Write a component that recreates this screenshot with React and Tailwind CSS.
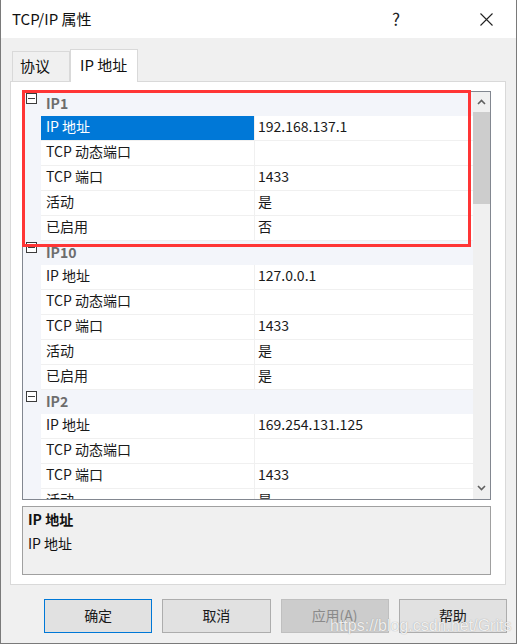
import React from "react";

const FONT = { fontFamily: '"Noto Sans CJK SC", "Noto Sans", sans-serif' };

const SECTIONS = [
  {
    name: "IP1",
    rows: [
      ["IP 地址", "192.168.137.1"],
      ["TCP 动态端口", ""],
      ["TCP 端口", "1433"],
      ["活动", "是"],
      ["已启用", "否"],
    ],
  },
  {
    name: "IP10",
    rows: [
      ["IP 地址", "127.0.0.1"],
      ["TCP 动态端口", ""],
      ["TCP 端口", "1433"],
      ["活动", "是"],
      ["已启用", "是"],
    ],
  },
  {
    name: "IP2",
    rows: [
      ["IP 地址", "169.254.131.125"],
      ["TCP 动态端口", ""],
      ["TCP 端口", "1433"],
      ["活动", "是"],
    ],
  },
];

function Collapse() {
  return (
    <div className="mt-[1px] ml-[3px] flex h-[11px] w-[11px] items-center justify-center border border-[#3c3c3c] bg-white">
      <div className="h-px w-[7px] bg-[#3c3c3c]" />
    </div>
  );
}

function Section({ s, first }) {
  return (
    <div>
      <div className="flex h-[24px] bg-[#f3f5fa]">
        <div className="w-[18px] shrink-0">
          <Collapse />
        </div>
        <div className="pl-[5px] text-[14px] font-bold leading-[22px] text-[#6d6d6d]">{s.name}</div>
      </div>
      {s.rows.map(([k, v], i) => {
        const sel = first && i === 0;
        return (
          <div key={k} className="flex h-[25px]">
            <div className="w-[18px] shrink-0 bg-[#f3f5fa]" />
            <div className="flex flex-1 border-b border-[#f0f0f0]">
              <div
                className={
                  "w-[214px] shrink-0 border-r border-[#f0f0f0] pl-[5px] text-[14px] leading-[21px] " +
                  (sel ? "bg-[#0078d7] text-white" : "text-[#1a1a1a]")
                }
              >
                {k}
              </div>
              <div className="pl-[3px] text-[14px] leading-[21px] text-[#1a1a1a]">{v}</div>
            </div>
          </div>
        );
      })}
    </div>
  );
}

function Scrollbar() {
  return (
    <div className="flex w-[17px] shrink-0 flex-col bg-[#f0f0f0]">
      <div className="flex h-[20px] items-center justify-center">
        <svg width="9" height="6" viewBox="0 0 9 6">
          <path d="M1 5 L4.5 1.5 L8 5" fill="none" stroke="#606060" strokeWidth="1.6" />
        </svg>
      </div>
      <div className="h-[92px] bg-[#cdcdcd]" />
      <div className="flex-1" />
      <div className="flex h-[20px] items-center justify-center pb-[2px]">
        <svg width="9" height="6" viewBox="0 0 9 6">
          <path d="M1 1 L4.5 4.5 L8 1" fill="none" stroke="#606060" strokeWidth="1.6" />
        </svg>
      </div>
    </div>
  );
}

function Btn({ children, primary, disabled }) {
  return (
    <div
      className={
        "flex h-[34px] w-[109px] items-center justify-center border pb-[1px] text-[14px] " +
        (primary
          ? "border-[#0078d7] bg-[#e1e1e1] text-[#1a1a1a]"
          : disabled
          ? "border-[#bfbfbf] bg-[#cccccc] text-[#8a8a8a]"
          : "border-[#adadad] bg-[#e1e1e1] text-[#1a1a1a]")
      }
    >
      {children}
    </div>
  );
}

export default function App() {
  return (
    <div style={FONT} className="relative flex h-[644px] w-[517px] flex-col overflow-hidden border-x border-b border-[#7a7a7a] bg-[#f0f0f0]">
      {/* title bar */}
      <div className="flex h-[38px] shrink-0 items-center bg-white pl-[11px]">
        <div className="text-[15px] text-[#111]">TCP/IP 属性</div>
        <div className="ml-auto mr-[80px] text-[17px] text-[#222]">?</div>
        <svg width="13" height="13" viewBox="0 0 13 13" className="mr-[23px]">
          <path d="M0.5 0.5 L12.5 12.5 M12.5 0.5 L0.5 12.5" stroke="#222" strokeWidth="1.1" />
        </svg>
      </div>

      <div className="flex flex-1 flex-col px-[9px]">
        {/* tabs */}
        <div className="mt-[11px] flex items-end pl-[2px]">
          <div className="flex h-[30px] w-[58px] items-center border border-b-0 border-[#d9d9d9] bg-[#f0f0f0] pb-[1px] pl-[7px] text-[15px] text-[#111]">
            协议
          </div>
          <div className="relative z-10 -mb-px flex h-[33px] w-[68px] items-center border border-b-0 border-[#d9d9d9] bg-white pb-[2px] pl-[9px] text-[15px] text-[#111]">
            IP 地址
          </div>
        </div>

        {/* panel */}
        <div className="h-[504px] w-[496px] border border-[#d9d9d9] bg-white pl-[11px] pt-[9px]">
          <div className="relative flex h-[409px] w-[469px] border border-[#828790] bg-white">
            <div className="flex-1 overflow-hidden">
              {SECTIONS.map((s, i) => (
                <Section key={s.name} s={s} first={i === 0} />
              ))}
            </div>
            <Scrollbar />
            <div className="pointer-events-none absolute left-[-1px] top-[-2px] h-[157px] w-[449px] border-[3px] border-[#ff3535]" />
          </div>

          <div className="mt-[6px] h-[69px] w-[469px] border border-[#a0a0a0] bg-[#f0f0f0] px-[5px]">
            <div className="text-[14px] font-bold leading-[24px] text-[#111]">IP 地址</div>
            <div className="text-[14px] leading-[25px] text-[#111]">IP 地址</div>
          </div>
        </div>

        {/* buttons */}
        <div className="mt-[14px] flex gap-[10px] pl-[34px]">
          <Btn primary>确定</Btn>
          <Btn>取消</Btn>
          <Btn disabled>应用(A)</Btn>
          <Btn>帮助</Btn>
        </div>
      </div>

      <div
        className="pointer-events-none absolute left-[329px] top-[614px] whitespace-nowrap text-[16px] text-white/85"
        style={{ textShadow: "0 0 1px rgba(90,90,90,0.6)", fontFamily: '"Liberation Sans", sans-serif' }}
      >
        https://blog.csdn.net/Grits
      </div>
    </div>
  );
}
